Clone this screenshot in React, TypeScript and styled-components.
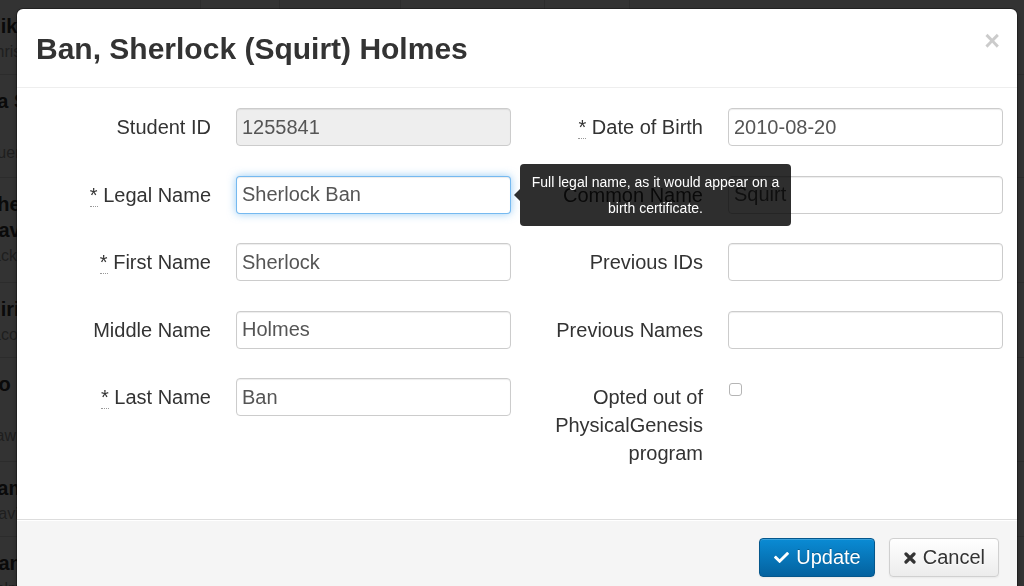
import React from 'react';
import styled, { createGlobalStyle } from 'styled-components';
import { FaCheck, FaPencilAlt } from 'react-icons/fa';

type Line = { text: string; kind: 'name' | 'sub' | 'edit' };
type RosterRow = { height: number; lines: Line[] };

const roster: RosterRow[] = [
  { height: 75, lines: [{ text: 'Mike Ross', kind: 'name' }, { text: 'Christina', kind: 'sub' }] },
  { height: 103, lines: [{ text: 'Ira Stone', kind: 'name' }, { text: '', kind: 'sub' }, { text: 'Fluent', kind: 'sub' }] },
  { height: 105, lines: [{ text: 'Phelps,', kind: 'name' }, { text: 'Davis J.', kind: 'name' }, { text: 'Jack B', kind: 'sub' }] },
  { height: 75, lines: [{ text: 'Miriam', kind: 'name' }, { text: 'Jacobs', kind: 'sub' }] },
  { height: 104, lines: [{ text: 'Bo B', kind: 'name' }, { text: '', kind: 'edit' }, { text: 'Dawn', kind: 'sub' }] },
  { height: 75, lines: [{ text: 'Sam', kind: 'name' }, { text: 'Slavin', kind: 'sub' }] },
  { height: 75, lines: [{ text: 'Ban, Sherlock', kind: 'name' }, { text: 'Holmes', kind: 'sub' }] },
];

type Field = {
  label: string;
  value: string;
  required?: boolean;
  readOnly?: boolean;
  focused?: boolean;
  hint?: string;
};

const leftFields: Field[] = [
  { label: 'Student ID', value: '1255841', readOnly: true },
  {
    label: 'Legal Name',
    value: 'Sherlock Ban',
    required: true,
    focused: true,
    hint: 'Full legal name, as it would appear on a birth certificate.',
  },
  { label: 'First Name', value: 'Sherlock', required: true },
  { label: 'Middle Name', value: 'Holmes' },
  { label: 'Last Name', value: 'Ban', required: true },
];

const rightFields: Field[] = [
  { label: 'Date of Birth', value: '2010-08-20', required: true },
  { label: 'Common Name', value: 'Squirt' },
  { label: 'Previous IDs', value: '' },
  { label: 'Previous Names', value: '' },
];

// heavy "remove" cross used on the cancel button
function RemoveIcon() {
  return (
    <svg viewBox="0 0 12 12" width="12" height="12" aria-hidden="true">
      <path
        d="M2 2 L10 10 M10 2 L2 10"
        stroke="currentColor"
        strokeWidth="3.2"
        strokeLinecap="round"
        fill="none"
      />
    </svg>
  );
}

function FieldLabel({ field }: { field: Field }) {
  return (
    <Label>
      {field.required && (
        <>
          <Req title="Required">*</Req>{' '}
        </>
      )}
      {field.label}
    </Label>
  );
}

function TextField({ field }: { field: Field }) {
  return (
    <FieldRow>
      <FieldLabel field={field} />
      <Control>
        <TextInput
          type="text"
          defaultValue={field.value}
          readOnly={field.readOnly}
          $focused={field.focused}
        />
        {field.hint && (
          <Tooltip>
            <TooltipArrow />
            {field.hint}
          </Tooltip>
        )}
      </Control>
    </FieldRow>
  );
}

export default function App() {
  return (
    <>
      <GlobalStyle />
      <Page>
        {roster.map((row, i) => (
          <Row key={i} style={{ height: row.height }}>
            <NameCell>
              {row.lines.map((line, j) =>
                line.kind === 'edit' ? (
                  <EditIcon key={j}>
                    <FaPencilAlt />
                  </EditIcon>
                ) : (
                  <RowLine key={j} $kind={line.kind}>
                    {line.text || '\u00a0'}
                  </RowLine>
                )
              )}
            </NameCell>
            <Cell />
            <Cell />
            <Cell />
            <Cell />
            <Cell />
          </Row>
        ))}
      </Page>
      <Backdrop />
      <Modal>
        <Header>
          <Title>Ban, Sherlock (Squirt) Holmes</Title>
          <Close type="button">×</Close>
        </Header>
        <Body>
          <Column>
            {leftFields.map((f) => (
              <TextField key={f.label} field={f} />
            ))}
          </Column>
          <Column>
            {rightFields.map((f) => (
              <TextField key={f.label} field={f} />
            ))}
            <FieldRow>
              <Label>
                Opted out of
                <br />
                PhysicalGenesis
                <br />
                program
              </Label>
              <Control>
                <Check type="checkbox" />
              </Control>
            </FieldRow>
          </Column>
        </Body>
        <Footer>
          <Button $primary>
            <FaCheck />
            Update
          </Button>
          <Button>
            <RemoveIcon />
            Cancel
          </Button>
        </Footer>
      </Modal>
    </>
  );
}

const GlobalStyle = createGlobalStyle`
  html, body {
    margin: 0;
    height: 100%;
    overflow: hidden;
  }
  body {
    font-family: "Liberation Sans", Arial, sans-serif;
    background: #fff;
    color: #333;
  }
  * {
    box-sizing: border-box;
  }
`;

const Page = styled.main`
  display: flex;
  flex-direction: column;
  width: 100%;
  height: 100vh;
  overflow: hidden;
  background: #fff;
`;

const Row = styled.div`
  display: grid;
  grid-template-columns: 200px 79px 121px 144px 85px 1fr;
  flex-shrink: 0;
  border-bottom: 1px solid #ddd;
`;

const Cell = styled.div`
  border-left: 1px solid #ddd;
`;

const NameCell = styled.div`
  display: flex;
  flex-direction: column;
  gap: 4px;
  padding: 15px 0 0;
  margin-left: -16px;
  white-space: nowrap;
`;

const RowLine = styled.div<{ $kind: 'name' | 'sub' | 'edit' }>`
  font-size: ${(p) => (p.$kind === 'name' ? '20px' : '16px')};
  font-weight: ${(p) => (p.$kind === 'name' ? 'bold' : 'normal')};
  color: ${(p) => (p.$kind === 'name' ? '#333' : '#999')};
  line-height: 22px;
`;

const EditIcon = styled.div`
  padding-left: 36px;
  font-size: 13px;
  color: #333;
  line-height: 22px;
`;

const Backdrop = styled.div`
  position: fixed;
  inset: 0;
  background: rgba(0, 0, 0, 0.8);
`;

const Modal = styled.section`
  position: fixed;
  top: 9px;
  left: 17px;
  width: 1000px;
  display: flex;
  flex-direction: column;
  background: #fff;
  border-radius: 6px;
  box-shadow: 0 0 0 1px rgba(0, 0, 0, 0.3), 0 3px 7px rgba(0, 0, 0, 0.3);
  overflow: hidden;
`;

const Header = styled.header`
  display: flex;
  justify-content: space-between;
  align-items: flex-start;
  height: 79px;
  padding: 0 17px 0 19px;
  border-bottom: 1px solid #eee;
`;

const Title = styled.h3`
  margin: 0;
  padding-top: 23px;
  font-size: 30px;
  line-height: 34px;
  font-weight: bold;
  color: #333;
`;

const Close = styled.button`
  margin-top: 18px;
  padding: 0;
  border: 0;
  background: transparent;
  font-family: "Liberation Sans", Arial, sans-serif;
  font-size: 27px;
  font-weight: bold;
  line-height: 28px;
  color: #000;
  opacity: 0.2;
  cursor: pointer;
`;

const Body = styled.div`
  display: flex;
  gap: 12px;
  height: 431px;
  padding: 20px 14px;
`;

const Column = styled.div`
  display: flex;
  flex-direction: column;
  gap: 29.5px;
  width: 480px;
`;

const FieldRow = styled.div`
  display: grid;
  grid-template-columns: 180px 275px;
  column-gap: 25px;
  min-height: 38px;
`;

const Label = styled.label`
  padding-top: 5px;
  text-align: right;
  font-size: 20px;
  line-height: 28px;
  color: #333;
`;

const Req = styled.abbr`
  text-decoration: none;
  border-bottom: 1px dotted #999;
  cursor: help;
`;

const Control = styled.div`
  position: relative;
`;

const TextInput = styled.input<{ $focused?: boolean }>`
  display: block;
  width: 275px;
  height: 38px;
  padding: 0 5px;
  font-family: "Liberation Sans", Arial, sans-serif;
  font-size: 20px;
  color: #555;
  background: ${(p) => (p.readOnly ? '#eee' : '#fff')};
  border: 1px solid ${(p) => (p.$focused ? 'rgba(82, 168, 236, 0.8)' : '#ccc')};
  border-radius: 4px;
  box-shadow: ${(p) =>
    p.$focused
      ? 'inset 0 1px 1px rgba(0,0,0,.075), 0 0 8px rgba(82,168,236,.6)'
      : 'inset 0 1px 1px rgba(0,0,0,.075)'};
  outline: none;
`;

const Tooltip = styled.div`
  position: absolute;
  z-index: 10;
  left: calc(100% + 9px);
  top: 50%;
  transform: translateY(-50%);
  width: 271px;
  padding: 5px 8px;
  font-size: 14px;
  line-height: 26px;
  text-align: center;
  color: #fff;
  background: rgba(0, 0, 0, 0.82);
  border-radius: 4px;
`;

const TooltipArrow = styled.span`
  position: absolute;
  left: -6px;
  top: 50%;
  margin-top: -6px;
  border-style: solid;
  border-width: 6px 6px 6px 0;
  border-color: transparent rgba(0, 0, 0, 0.82) transparent transparent;
`;

const Check = styled.input`
  appearance: none;
  display: block;
  width: 13px;
  height: 13px;
  margin: 5px 0 0 1px;
  background: #fff;
  border: 1px solid #b5b5b5;
  border-radius: 3px;
`;

const Footer = styled.footer`
  display: flex;
  justify-content: flex-end;
  gap: 14px;
  height: 80px;
  padding: 18px 18px 0;
  background: #f5f5f5;
  border-top: 1px solid #ddd;
  box-shadow: inset 0 1px 0 #fff;
`;

const Button = styled.button<{ $primary?: boolean }>`
  display: inline-flex;
  align-items: center;
  gap: 7px;
  height: 39px;
  padding: 0 13px 0 14px;
  font-family: "Liberation Sans", Arial, sans-serif;
  font-size: 20px;
  color: ${(p) => (p.$primary ? '#fff' : '#333')};
  text-shadow: ${(p) => (p.$primary ? '0 -1px 0 rgba(0,0,0,.25)' : '0 1px 1px rgba(255,255,255,.75)')};
  background: ${(p) =>
    p.$primary ? 'linear-gradient(#0a8bd4, #04629f)' : 'linear-gradient(#fff, #ececec)'};
  border: 1px solid ${(p) => (p.$primary ? '#05578c' : '#d0d0d0')};
  border-radius: 4px;
  box-shadow: inset 0 1px 0 rgba(255, 255, 255, 0.2), 0 1px 2px rgba(0, 0, 0, 0.05);
  cursor: pointer;

  svg {
    flex-shrink: 0;
    width: ${(p) => (p.$primary ? '15px' : '12px')};
    height: ${(p) => (p.$primary ? '15px' : '12px')};
  }
`;
